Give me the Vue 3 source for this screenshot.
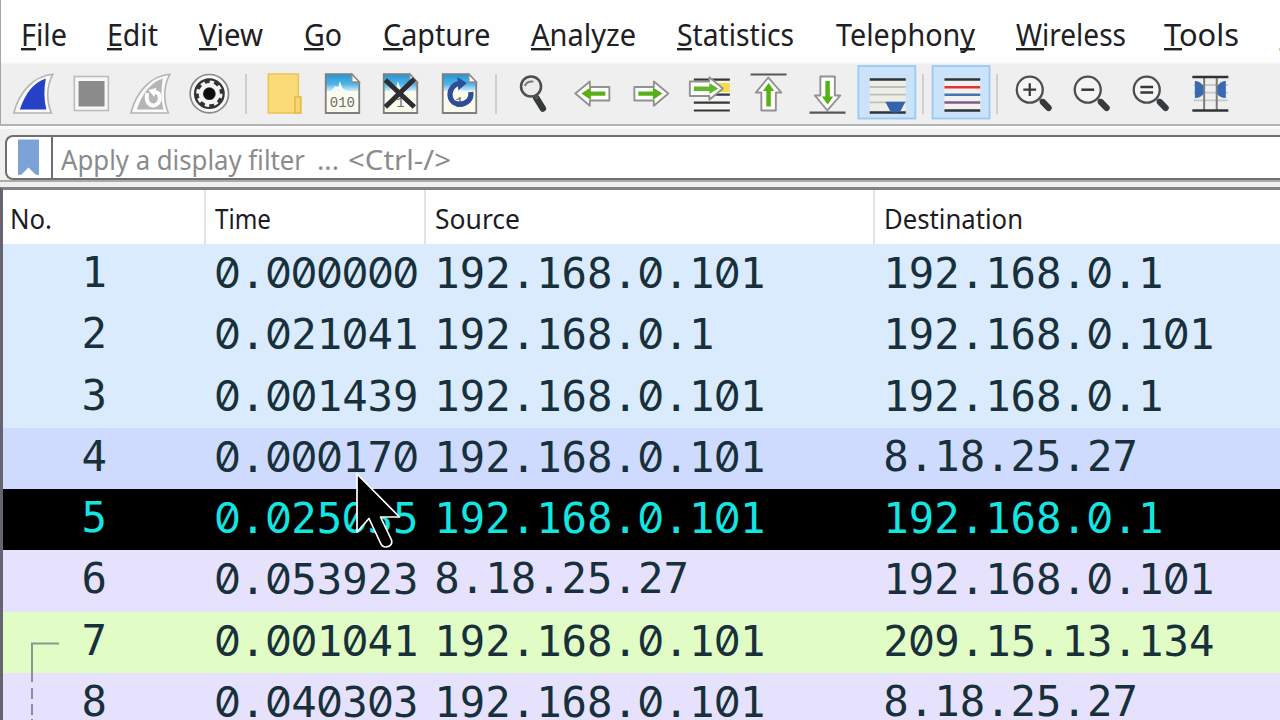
<script setup>
const menus = [
  { t: 'File', x: 21, w: 46, ux: 0, uw: 15 },
  { t: 'Edit', x: 107, w: 51, ux: 0, uw: 15 },
  { t: 'View', x: 199, w: 64, ux: 0, uw: 18 },
  { t: 'Go', x: 304, w: 38, ux: 0, uw: 20 },
  { t: 'Capture', x: 383, w: 107.5, ux: 0, uw: 20 },
  { t: 'Analyze', x: 531, w: 105, ux: 0, uw: 20 },
  { t: 'Statistics', x: 677, w: 117, ux: 0, uw: 15 },
  { t: 'Telephony', x: 836, w: 139, ux: 124, uw: 15 },
  { t: 'Wireless', x: 1016, w: 110, ux: 0, uw: 28 },
  { t: 'Tools', x: 1164, w: 75, ux: 0, uw: 18 },
].map((m, i, a) => ({ ...m, gap: i ? m.x - a[i - 1].x - a[i - 1].w : m.x }))

const tools = [
  'fin', 'stop', 'restart', 'gear', 'sep', 'folder', 'save', 'close', 'reload', 'sep',
  'find', 'back', 'forward', 'goto', 'first', 'last', 'auto', 'sep', 'color', 'sep',
  'zin', 'zout', 'znormal', 'resize',
]

const headers = [
  { t: 'No.', w: 42, c: 'no' },
  { t: 'Time', w: 56, c: 'time' },
  { t: 'Source', w: 85, c: 'src' },
  { t: 'Destination', w: 139, c: 'dst' },
]

// Splits a value so that each zero can take the slashed form.
const parts = (s) => s.split(/(0)/).filter(Boolean)

const rows = [
  [1, '0.000000', '192.168.0.101', '192.168.0.1', 'udp'],
  [2, '0.021041', '192.168.0.1', '192.168.0.101', 'udp'],
  [3, '0.001439', '192.168.0.101', '192.168.0.1', 'udp'],
  [4, '0.000170', '192.168.0.101', '8.18.25.27', 'hover'],
  [5, '0.025035', '192.168.0.101', '192.168.0.1', 'bad'],
  [6, '0.053923', '8.18.25.27', '192.168.0.101', 'tcp'],
  [7, '0.001041', '192.168.0.101', '209.15.13.134', 'http'],
  [8, '0.040303', '192.168.0.101', '8.18.25.27', 'tcp'],
]
</script>

<template>
  <div class="window">
    <nav class="menubar">
      <svg v-for="m in menus" :key="m.t" class="menu" :width="m.w" height="62" :style="{ marginLeft: m.gap + 'px' }">
        <text x="0" y="45.500" :textLength="m.w" lengthAdjust="spacingAndGlyphs">{{ m.t }}</text>
        <rect :x="m.ux" y="48" :width="m.uw" height="2.400" />
      </svg>
      <span class="menu-cut"></span>
    </nav>

    <div class="toolbar">
      <template v-for="(t, i) in tools" :key="i">
        <span v-if="t === 'sep'" class="sep"></span>
        <svg v-else class="tool" viewBox="-29.35 63 58.7 62">
          <g v-if="t === 'fin' || t === 'restart'">
            <path d="M-19.500 113C-14 92 0 76 19.500 74.300C13 86 13 101 18 113Z" fill="#fafafa" stroke="#b4b4b4" stroke-width="1.600" />
            <path d="M-13.500 109.500C-8 93 1 82 12.500 78.500C10.500 89 10.500 99 13 109.500Z" :fill="t === 'fin' ? '#2741c6' : '#b5b5b5'" />
            <g v-if="t === 'restart'" fill="none" stroke="#fff" stroke-width="4">
              <path d="M-3 93C-7 108 9 109 9.500 98C9.500 95 8 92.500 5 92" />
              <path d="M-2 90L6 88L4 97Z" fill="#fff" stroke="none" />
            </g>
          </g>
          <g v-else-if="t === 'stop'">
            <rect x="-17" y="76.500" width="34" height="34" fill="#f8f8f8" stroke="#bcbcbc" stroke-width="1.600" />
            <rect x="-12.800" y="81" width="26" height="25.500" fill="#8b8b8b" />
          </g>
          <g v-else-if="t === 'gear'">
            <circle cy="93.700" r="19.200" fill="#f8f8f8" stroke="#8a8a8a" stroke-width="1.700" />
            <circle cy="93.700" r="15.400" fill="#333" />
            <circle cy="93.700" r="8.500" fill="none" stroke="#f5f5f5" stroke-width="4.200" />
            <circle cy="93.700" r="11.600" fill="none" stroke="#f5f5f5" stroke-width="3.200" stroke-dasharray="4.300 4.811" />
            <circle cy="93.700" r="5.600" fill="#0d0d0d" />
          </g>
          <g v-else-if="t === 'folder'">
            <path d="M-15 74H15V97H17.300V113H-15Z" fill="#fbdb78" stroke="#edc455" stroke-width="1.600" />
            <path d="M11.500 113V97H17.300V113Z" fill="#f8d76e" stroke="#e3b94d" stroke-width="1.500" />
          </g>
          <g v-else-if="t === 'save' || t === 'close' || t === 'reload'">
            <path d="M-16.600 74.200H9.500L16.900 82V113H-16.600Z" fill="#fafaef" />
            <path d="M-16.600 74.200H9.500L16.900 82V91H-16.600Z" fill="url(#sky)" />
            <path d="M-12 92L-7 86L-4 87L-2.500 81L0 88L5 92Z" fill="#f2f9fd" />
            <text x="0" y="107" class="bits" text-anchor="middle">{{ t === 'save' ? '010' : '1' }}</text>
            <path d="M-16.600 74.200H9.500L16.900 82V113H-16.600Z" fill="none" stroke="#7d807c" stroke-width="1.800" />
            <path d="M9.500 74.200V82H16.900Z" fill="#fff" stroke="#8a8d8a" stroke-width="1.300" />
            <path v-if="t === 'close'" d="M-15 80L14 107M14 79L-15 107" stroke="#2c2e30" stroke-width="5" />
            <g v-if="t === 'reload'">
              <path d="M0 83.500C-12 85 -13 103.500 0 104C8 104 12.500 99 11.500 92" fill="none" stroke="#2c4f96" stroke-width="5.200" />
              <path d="M-2 77L7.500 83L-1 90.500Z" fill="#2c4f96" />
            </g>
          </g>
          <g v-else-if="t === 'find'">
            <path d="M3 98L9.500 108.500" stroke="#36393b" stroke-width="6.500" stroke-linecap="round" />
            <path d="M1 94L4 99" stroke="#555" stroke-width="3" />
            <circle cx="-2.300" cy="86.500" r="10" fill="#ececec" stroke="#4c4f50" stroke-width="2.600" />
            <path d="M-8.500 86Q-7 81 0 81.500" fill="none" stroke="#777" stroke-width="2" />
          </g>
          <g v-else-if="t === 'back' || t === 'forward'" :transform="t === 'forward' ? 'scale(-1 1)' : ''">
            <path d="M-17 93.600L-2.500 81.500V87H17V100.500H-2.500V105.800Z" fill="#fff" stroke="#929292" stroke-width="1.900" stroke-linejoin="round" />
            <path d="M-11 93.600L-1.500 87.200V91.600H13V95.700H-1.500V100Z" fill="#58b017" />
          </g>
          <g v-else-if="t === 'goto'">
            <rect x="-15.500" y="79" width="36" height="33" fill="#f4f4f0" />
            <path d="M-15.500 79.600H20.500M-15.500 94.700H20.500M-15.500 102.700H20.500M-15.500 110.500H20.500" stroke="#343638" stroke-width="2.200" />
            <rect x="9" y="83" width="11.500" height="9" fill="#f8da4d" />
            <path d="M13.500 88.500L0 77.300V81.500H-19.500V96H0V99.800Z" fill="#fff" stroke="#929292" stroke-width="1.900" stroke-linejoin="round" />
            <path d="M9 88.500L0 83V86.500H-15.500V91H0V94Z" fill="#62b62a" />
          </g>
          <g v-else-if="t === 'first'">
            <path d="M0 77.500L13 92.500H7.500V110.500H-7V92.500H-12.500Z" fill="#fff" stroke="#929292" stroke-width="1.900" stroke-linejoin="round" />
            <path d="M.300 83L6 91H2.500V106.500H-2V91H-5.500Z" fill="#58b017" />
            <path d="M-17.800 74.500H18.200" stroke="#55585a" stroke-width="2.200" />
          </g>
          <g v-else-if="t === 'last'">
            <path d="M0 110.500L13 95.500H7.500V76.500H-7V95.500H-12.500Z" fill="#fff" stroke="#929292" stroke-width="1.900" stroke-linejoin="round" />
            <path d="M.300 104.500L6 96.500H2.500V81H-2V96.500H-5.500Z" fill="#58b017" />
            <path d="M-17.800 112.600H18.200" stroke="#55585a" stroke-width="2.200" />
          </g>
          <g v-else-if="t === 'auto'">
            <rect x="-27" y="66" width="57" height="52.500" fill="#cae3fa" stroke="#98c9f5" stroke-width="1.800" />
            <rect x="-15.600" y="80" width="36" height="32" fill="#eeeee9" />
            <path d="M-15.600 87H20.400M-15.600 94.700H20.400M-15.600 102.300H20.400" stroke="#bebfba" stroke-width="1.800" />
            <path d="M-15.600 79.500H20.400M-15.600 112.500H20.400" stroke="#303438" stroke-width="2.500" />
            <path d="M0 101.800H20L15.500 110.500Q14.500 112.500 12 112.500H8Q5.500 112.500 4.500 110.500Z" fill="#3464aa" />
          </g>
          <g v-else-if="t === 'color'">
            <rect x="-27.800" y="66" width="57" height="52.500" fill="#cae3fa" stroke="#98c9f5" stroke-width="1.800" />
            <rect x="-15.900" y="80" width="36" height="30" fill="#f1f1ef" />
            <path d="M-15.900 79.500H19.900M-15.900 110.500H19.900" stroke="#303438" stroke-width="2.500" />
            <path d="M-15.900 87.200H19.900" stroke="#ea3034" stroke-width="2.500" />
            <path d="M-15.900 94.800H19.900" stroke="#4775ad" stroke-width="2.500" />
            <path d="M-15.900 102.500H19.900" stroke="#80588a" stroke-width="2.500" />
          </g>
          <g v-else-if="t[0] === 'z'">
            <path d="M6 99.500L8.500 102" stroke="#44474a" stroke-width="3" />
            <path d="M8.500 102L14.300 108" stroke="#383b3e" stroke-width="6.200" stroke-linecap="round" />
            <circle cx="-4.600" cy="89.700" r="13" fill="#f5f5f5" stroke="#4c4f52" stroke-width="2.300" />
            <path v-if="t === 'zin'" d="M-11 89.700H1.800M-4.600 83.300V96.100" stroke="#36393c" stroke-width="2.300" />
            <path v-if="t === 'zout'" d="M-11 89.700H1.800" stroke="#36393c" stroke-width="2.500" />
            <path v-if="t === 'znormal'" d="M-11 87H1.800M-11 92.500H1.800" stroke="#36393c" stroke-width="2.300" />
          </g>
          <g v-else-if="t === 'resize'">
            <rect x="-16.500" y="78" width="34" height="32" fill="#efefed" />
            <path d="M-16.500 85H17.500M-16.500 92.700H17.500M-16.500 100.300H17.500" stroke="#c6c8c4" stroke-width="1.800" />
            <path d="M-15.500 81Q-11 80 -6.200 87V93Q-9 98 -15.500 98Z" fill="#386ab3" />
            <path d="M15.500 81Q11 80 6.200 87V93Q9 98 15.500 98Z" fill="#386ab3" />
            <path d="M-6.200 77V110M6.400 77V110" stroke="#7a7d7b" stroke-width="2" />
            <path d="M-18 77H18M-18 110.500H18" stroke="#303336" stroke-width="2.500" />
          </g>
        </svg>
      </template>
      <svg class="defs" width="0" height="0">
        <linearGradient id="sky" x1="0" y1="0" x2="0" y2="1">
          <stop offset="0" stop-color="#2496d8" />
          <stop offset=".6" stop-color="#52b4e6" />
          <stop offset="1" stop-color="#d4ecf7" />
        </linearGradient>
      </svg>
    </div>

    <div class="filterbar">
      <div class="filter">
        <div class="bookmark">
          <svg width="21" height="36" viewBox="0 0 21 36"><path d="M0 .500H21V36L17.500 35.500L10.500 28.500L3.500 35.500L0 36Z" fill="#7ba3d7" /></svg>
        </div>
        <svg class="placeholder" width="390" height="41">
          <text x="0" y="33" textLength="244" lengthAdjust="spacingAndGlyphs">Apply a display filter</text>
          <text x="256" y="33" textLength="22" lengthAdjust="spacingAndGlyphs">...</text>
          <text x="287" y="33" textLength="103" lengthAdjust="spacingAndGlyphs">&lt;Ctrl-/&gt;</text>
        </svg>
      </div>
    </div>

    <div class="packets">
      <div class="grid head">
        <div v-for="h in headers" :key="h.t" class="hcell" :class="h.c">
          <svg :width="h.w" height="53"><text x="0" y="38.700" :textLength="h.w" lengthAdjust="spacingAndGlyphs">{{ h.t }}</text></svg>
        </div>
      </div>
      <div v-for="r in rows" :key="r[0]" class="grid row" :class="r[4]">
        <div class="num">
          <svg v-if="r[0] === 7" class="link" width="60" height="61">
            <path d="M56 31.500H29V61" fill="none" stroke="#8c9694" stroke-width="2" />
          </svg>
          <svg v-if="r[0] === 8" class="link" width="60" height="61">
            <path d="M29 0V9M29 15V26M29 31V42M29 46V57" stroke="#8d8b9d" stroke-width="2" />
          </svg>
          {{ r[0] }}
        </div>
        <div v-for="c in 3" :key="c" class="cell"><span v-for="(p, k) in parts(r[c])" :key="k" :class="{ zero: p === '0' }">{{ p }}</span></div>
      </div>
    </div>

    <svg class="cursor" width="50" height="80" viewBox="352 470 50 80">
      <path d="M357 474V532L369 518.500L380.500 543Q382 547 386 547Q393 546 391.500 540L380.500 517H399.500Z" fill="#000" stroke="#fff" stroke-width="1.700" stroke-linejoin="round" />
    </svg>
  </div>
</template>

<style>
html,
body {
  margin: 0;
  overflow: hidden;
}
</style>

<style scoped>
.window {
  position: relative;
  box-sizing: border-box;
  width: 1280px;
  height: 720px;
  overflow: hidden;
  background: #f0f0f0;
  font-family: "Noto Sans", "Open Sans", sans-serif;
  display: flex;
  flex-direction: column;
}
.menubar {
  display: flex;
  height: 62px;
  flex: none;
  background: #fefefe;
  box-shadow: inset 1px 0 #a5a5a5;
}
.menu {
  flex: none;
  overflow: visible;
  font-size: 31px;
  fill: #202024;
}
.menu-cut {
  width: 2px;
  height: 3px;
  flex: none;
  margin: 48px 0 0 40px;
  background: #e8c873;
}
.toolbar {
  display: flex;
  box-sizing: border-box;
  height: 64px;
  flex: none;
  padding: 1px 0 0 3.700px;
  background: #efefef;
  border-bottom: 2px solid #b3b3b3;
  box-shadow: inset 1px 0 #a5a5a5, inset 0 2px #f7f7f7;
}
.tool {
  width: 58.700px;
  height: 62px;
  flex: none;
  overflow: visible;
}
.defs {
  position: absolute;
}
.sep {
  width: 2px;
  height: 40px;
  flex: none;
  margin: 11px 6.750px 0;
  background: #cfcfcf;
}
.bits {
  font: 14px "Liberation Mono", monospace;
  fill: #6c6f6a;
}
.filterbar {
  box-sizing: border-box;
  height: 61px;
  flex: none;
  padding: 9px 0 0 5px;
  background: linear-gradient(#fafafa 0 3px, #f0f0f0 3px 54px, #aaa 54px 56px, #efefef 56px);
}
.filter {
  display: flex;
  box-sizing: border-box;
  height: 45px;
  border: 2px solid #6f6f6f;
  border-right: 0;
  border-radius: 8px 0 0 8px;
  background: #fff;
}
.bookmark {
  display: flex;
  width: 44px;
  box-sizing: content-box;
  border-right: 2px solid #6f6f6f;
  padding: 2px 0 0;
}
.bookmark svg {
  margin-left: 11px;
}
.placeholder {
  margin-left: 8px;
  overflow: visible;
  font-size: 27px;
  fill: #8b8b8b;
}
.filter,
.packets {
  overflow: hidden;
}
.packets {
  flex: 1;
  border-top: 3px solid #818187;
  border-left: 3px solid #66646f;
  background: #fff;
}
.grid {
  display: grid;
  grid-template-columns: 203px 219.500px 449px 1fr;
}
.head {
  height: 54.200px;
}
.hcell {
  box-sizing: border-box;
  border-right: 2px solid #e4e4e4;
  padding-left: 9px;
}
.hcell.no {
  padding-left: 7px;
}
.hcell svg {
  display: block;
  overflow: visible;
  font-size: 27px;
  fill: #1c1c26;
}
.hcell.dst {
  border-right: 0;
}
.row {
  height: 61.250px;
  font: 42.300px/58px "DejaVu Sans Mono", "Liberation Mono", monospace;
  color: #18303a;
  white-space: pre;
}
.num {
  position: relative;
  padding-left: 78.500px;
  white-space: normal;
}
.link {
  position: absolute;
  left: 0;
  top: 0;
}
.cell {
  height: 61.250px;
  padding-left: 8.800px;
}
.zero {
  display: inline-flex;
  justify-content: center;
  width: 25.470px;
  font-family: "Inter", "DejaVu Sans Mono", monospace;
  font-feature-settings: "zero" 1, "tnum" 1;
}
.udp { background: #daebfe; }
.hover { background: #cedbfe; }
.bad { background: #000; color: #12e5e2; }
.tcp { background: #e6e2fd; }
.http { background: #e1fcc4; }
.cursor {
  position: absolute;
  left: 352px;
  top: 470px;
}
</style>
